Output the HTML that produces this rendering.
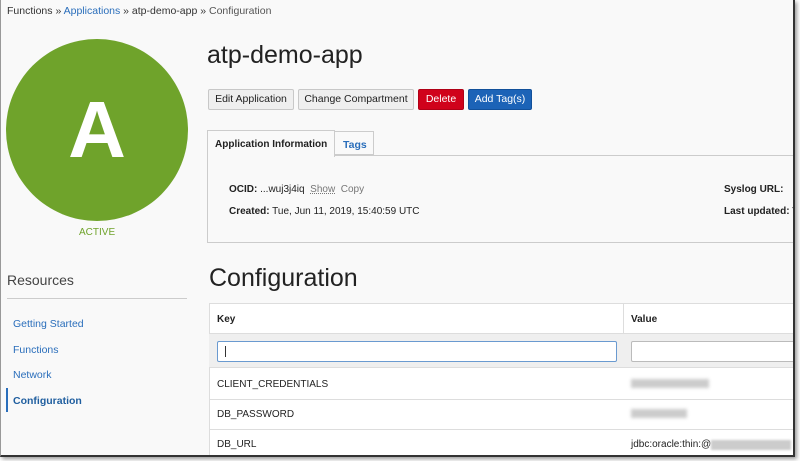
<!DOCTYPE html>
<html><head><style>
*{margin:0;padding:0;box-sizing:border-box}
body{width:800px;height:461px;background:#fff;font-family:"Liberation Sans",sans-serif;position:relative;overflow:hidden}
#frame{position:absolute;left:0;top:0;width:795px;height:457px;background:#f9f9f9;border-left:1px solid #999;border-right:2px solid #333;border-bottom:2px solid #333;box-shadow:2px 2px 4px rgba(0,0,0,.4);overflow:hidden}
.a{position:absolute;white-space:nowrap}
.btn{position:absolute;top:89px;height:21px;font-size:10.5px;line-height:19px;text-align:center;border:1px solid #c8c8c8;background:#efefef;color:#222;border-radius:2px}
.nav{font-size:10.5px;color:#2a6ebb}
.b{font-weight:bold}
</style></head><body>
<div id="frame">
<div class="a" style="left:6px;top:5px;font-size:10.5px;color:#333">Functions » <span style="color:#2a6ebb">Applications</span> » atp-demo-app » <span style="color:#555">Configuration</span></div>
<div class="a" style="left:5px;top:39px;width:182px;height:182px;border-radius:50%;background:#6fa32b;color:#fff;font-size:80px;font-weight:bold;text-align:center;line-height:182px">A</div>
<div class="a" style="left:78px;top:227px;font-size:10px;color:#6fa32b">ACTIVE</div>
<div class="a" style="left:6px;top:272px;font-size:14px;color:#444">Resources</div>
<div class="a" style="left:6px;top:298px;width:180px;height:1px;background:#ccc"></div>
<div class="a nav" style="left:12px;top:318px">Getting Started</div>
<div class="a nav" style="left:12px;top:344px">Functions</div>
<div class="a nav" style="left:12px;top:369px">Network</div>
<div class="a" style="left:5px;top:388px;width:2px;height:24px;background:#2a6ebb"></div>
<div class="a nav b" style="left:12px;top:395px;color:#1f5e9f">Configuration</div>

<div class="a" style="left:206px;top:41px;font-size:25px;color:#222">atp-demo-app</div>
<div class="btn" style="left:207px;width:86px">Edit Application</div>
<div class="btn" style="left:297px;width:116px">Change Compartment</div>
<div class="btn" style="left:417px;width:46px;background:#d0021b;border-color:#b00016;color:#fff">Delete</div>
<div class="btn" style="left:467px;width:64px;background:#1c63b7;border-color:#12509a;color:#fff">Add Tag(s)</div>

<div class="a" style="left:206px;top:155px;width:600px;height:88px;border:1px solid #ccc;background:#f9f9f9"></div>
<div class="a" style="left:206px;top:130px;width:128px;height:27px;border:1px solid #ccc;border-bottom:none;background:#f9f9f9;font-size:10px;font-weight:bold;color:#222;padding:8px 0 0 7px">Application Information</div>
<div class="a" style="left:334px;top:131px;width:39px;height:24px;border:1px solid #ccc;border-left:none;background:#f9f9f9;font-size:10.5px;font-weight:bold;color:#2a6ebb;padding:7px 0 0 8px">Tags</div>
<div class="a" style="left:228px;top:184px;font-size:10px;color:#222"><b>OCID:</b> ...wuj3j4iq &nbsp;<span style="color:#777;text-decoration:underline dotted">Show</span> &nbsp;<span style="color:#777">Copy</span></div>
<div class="a" style="left:228px;top:206px;font-size:10px;color:#222"><b>Created:</b> Tue, Jun 11, 2019, 15:40:59 UTC</div>
<div class="a b" style="left:723px;top:184px;font-size:10px;color:#222">Syslog URL:</div>
<div class="a b" style="left:723px;top:206px;font-size:10px;color:#222">Last updated: T</div>

<div class="a" style="left:208px;top:264px;font-size:25px;color:#222">Configuration</div>
<div class="a" style="left:208px;top:303px;width:600px;height:160px;border:1px solid #ddd;background:#fff"></div>
<div class="a" style="left:208px;top:333px;width:600px;height:35px;background:#efefef;border-top:1px solid #ddd;border-bottom:1px solid #ddd"></div>
<div class="a" style="left:622px;top:303px;width:1px;height:30px;background:#ddd"></div>
<div class="a b" style="left:216px;top:314px;font-size:10px;color:#222">Key</div>
<div class="a b" style="left:630px;top:314px;font-size:10px;color:#222">Value</div>
<div class="a" style="left:216px;top:341px;width:400px;height:21px;background:#fff;border:1px solid #6a9ad0;border-radius:2px"></div>
<div class="a" style="left:224px;top:346px;width:1px;height:11px;background:#333"></div>
<div class="a" style="left:630px;top:341px;width:180px;height:21px;background:#fff;border:1px solid #bbb;border-radius:2px"></div>
<div class="a" style="left:208px;top:399px;width:600px;height:1px;background:#ddd"></div>
<div class="a" style="left:208px;top:429px;width:600px;height:1px;background:#ddd"></div>
<div class="a" style="left:216px;top:379px;font-size:10px;color:#222">CLIENT_CREDENTIALS</div>
<div class="a" style="left:216px;top:409px;font-size:10px;color:#222">DB_PASSWORD</div>
<div class="a" style="left:216px;top:439px;font-size:10px;color:#222">DB_URL</div>
<div class="a" style="left:630px;top:379px;width:78px;height:9px;background:#ccc;filter:blur(1.5px)"></div>
<div class="a" style="left:630px;top:409px;width:56px;height:9px;background:#ccc;filter:blur(1.5px)"></div>
<div class="a" style="left:630px;top:439px;font-size:10px;color:#222">jdbc:oracle:thin:@</div>
<div class="a" style="left:710px;top:440px;width:80px;height:10px;background:#ccc;filter:blur(1px)"></div>
</div>
</body></html>
